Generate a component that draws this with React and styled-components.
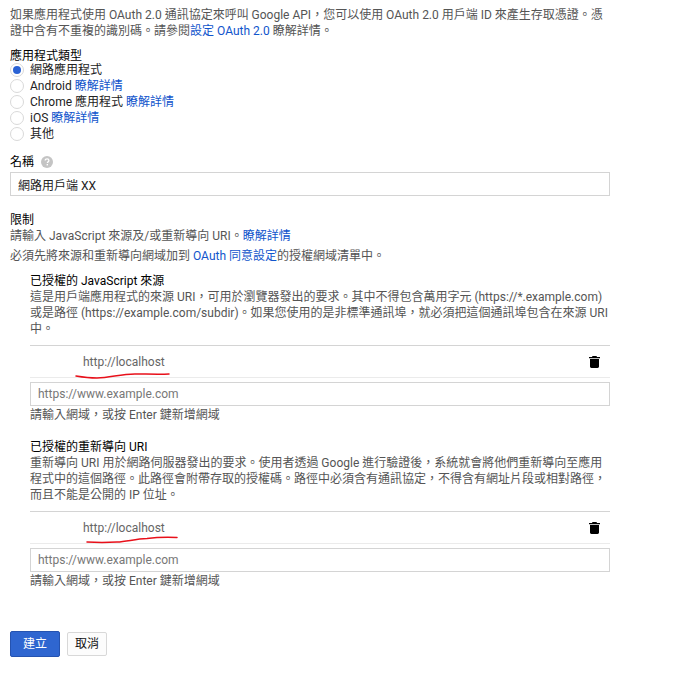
import styled, { createGlobalStyle } from 'styled-components';

const GlobalStyle = createGlobalStyle`
  html, body {
    margin: 0;
    padding: 0;
    background: #fff;
  }
  body {
    font-family: Roboto, "Noto Sans CJK TC", sans-serif;
    font-size: 12px;
    line-height: 16px;
    color: #555;
  }
`;

const Page = styled.form`
  width: 600px;
  height: 676px;
  padding: 7px 0 0 10px;
`;

const Intro = styled.p`
  margin: 0 0 9px;
`;

const A = styled.span`
  color: #15c;
`;

const Label = styled.div`
  color: #000;
`;

const RadioList = styled.div`
  display: flex;
  flex-direction: column;
  margin-top: -2px;
`;

const RadioRow = styled.div`
  display: flex;
  align-items: center;
  height: 16px;
  gap: 6px;
  color: #222;
`;

const Radio = styled.span`
  width: 14px;
  height: 14px;
  box-sizing: border-box;
  border-radius: 50%;
  border: 1px solid #d9d9d9;
  padding: 2px;
  background: ${(p) => (p.$on ? '#2a62d4' : '#fff')};
  background-clip: content-box;
  flex: none;
`;

const NameRow = styled.div`
  display: flex;
  align-items: center;
  gap: 7px;
  margin: 12px 0 2px;
  color: #000;
`;

const Input = styled.input`
  display: block;
  width: 100%;
  height: 24px;
  box-sizing: border-box;
  border: 1px solid #d4d4d4;
  padding: 0 7px;
  font: inherit;
  color: #222;
  background: #fff;
  outline: none;

  &::placeholder {
    color: #777;
    opacity: 1;
  }
`;

const Restrict = styled.div`
  margin-top: 16px;
`;

const Note = styled.div`
  margin-top: 4px;
`;

const Section = styled.section`
  margin: ${(p) => p.$top}px 0 0 20px;
`;

const UriRow = styled.div`
  position: relative;
  display: flex;
  align-items: center;
  justify-content: space-between;
  height: 31px;
  margin: 8px 0 4px;
  padding: 0 10px 0 53px;
  border-top: 1px solid #d4d4d4;
  border-bottom: 1px solid #ebebeb;
  color: #666;
`;

const Scribble = styled.svg`
  position: absolute;
  left: 40px;
  top: 24px;
  pointer-events: none;
`;

const Hint = styled.div`
  margin-top: 1px;
`;

const Actions = styled.div`
  display: flex;
  align-items: center;
  gap: 7px;
  margin-top: 42px;
`;

const Primary = styled.button`
  width: 50px;
  height: 26px;
  border: 1px solid #2553b0;
  border-radius: 2px;
  background: #2f66d0;
  color: #fff;
  font: inherit;
  padding: 0;
`;

const Secondary = styled.button`
  width: 40px;
  height: 24px;
  border: 1px solid #d8d8d8;
  border-radius: 2px;
  background: #fcfcfc;
  color: #111;
  font: inherit;
  padding: 0;
`;

const HelpIcon = () => (
  <svg width="12" height="12" viewBox="0 0 12 12">
    <circle cx="6" cy="6" r="6" fill="#c4c4c4" />
    <path d="M4.2 4.6c0-1.1.8-1.8 1.9-1.8s1.8.7 1.8 1.6c0 1.2-1.5 1.3-1.5 2.5" fill="none" stroke="#fff" strokeWidth="1.3" />
    <rect x="5.6" y="8" width="1.4" height="1.4" fill="#fff" />
  </svg>
);

const TrashIcon = () => (
  <svg width="11" height="12" viewBox="0 0 11 12">
    <path d="M3.5 0h4l.5 1h3v1.2H0V1h3z" fill="#000" />
    <path d="M1 3h9v7.6c0 .8-.6 1.4-1.4 1.4H2.4C1.6 12 1 11.4 1 10.6z" fill="#000" />
  </svg>
);

const types = [
  { label: '網路應用程式', on: true },
  { label: 'Android', more: true },
  { label: 'Chrome 應用程式', more: true },
  { label: 'iOS', more: true },
  { label: '其他' },
];

const App = () => {
  return (
    <Page>
      <GlobalStyle />
      <Intro>
        如果應用程式使用 OAuth 2.0 通訊協定來呼叫 Google API&#xFF0C;您可以使用 OAuth 2.0 用戶端 ID 來產生存取憑證。憑證中含有不重複的識別碼。請參閱<A>設定 OAuth 2.0</A> 瞭解詳情。
      </Intro>

      <Label>應用程式類型</Label>
      <RadioList>
        {types.map((t) => (
          <RadioRow key={t.label}>
            <Radio $on={t.on} />
            <span>
              {t.label}
              {t.more && <A> 瞭解詳情</A>}
            </span>
          </RadioRow>
        ))}
      </RadioList>

      <NameRow>
        名稱 <HelpIcon />
      </NameRow>
      <Input defaultValue="網路用戶端 XX" />

      <Restrict>
        <Label>限制</Label>
        <div>
          請輸入 JavaScript 來源及/或重新導向 URI。<A>瞭解詳情</A>
        </div>
        <Note>
          必須先將來源和重新導向網域加到 <A>OAuth 同意設定</A>的授權網域清單中。
        </Note>
      </Restrict>

      <Section $top={9}>
        <Label>已授權的 JavaScript 來源</Label>
        <div>
          這是用戶端應用程式的來源 URI&#xFF0C;可用於瀏覽器發出的要求。其中不得包含萬用字元 (https://*.example.com) 或是路徑 (https://example.com/subdir)。如果您使用的是非標準通訊埠&#xFF0C;就必須把這個通訊埠包含在來源 URI 中。
        </div>
        <UriRow>
          http://localhost
          <TrashIcon />
          <Scribble width="110" height="10" viewBox="0 0 110 10">
            <path d="M6 6C12 7 20 8 27 8C40 8 50 4 65 4C75 4 90 4.5 99 4" fill="none" stroke="#e8101a" strokeWidth="1.5" strokeLinecap="round" />
          </Scribble>
        </UriRow>
        <Input placeholder="https://www.example.com" />
        <Hint>請輸入網域&#xFF0C;或按 Enter 鍵新增網域</Hint>
      </Section>

      <Section $top={16}>
        <Label>已授權的重新導向 URI</Label>
        <div>
          重新導向 URI 用於網路伺服器發出的要求。使用者透過 Google 進行驗證後&#xFF0C;系統就會將他們重新導向至應用程式中的這個路徑。此路徑會附帶存取的授權碼。路徑中必須含有通訊協定&#xFF0C;不得含有網址片段或相對路徑&#xFF0C;而且不能是公開的 IP 位址。
        </div>
        <UriRow>
          http://localhost
          <TrashIcon />
          <Scribble width="110" height="10" viewBox="0 0 110 10">
            <path d="M17 6C27 6.5 37 6.5 47 6C57 5.5 65 3 77 2.5C85 1.5 95 1 107 1.5" fill="none" stroke="#e8101a" strokeWidth="1.5" strokeLinecap="round" />
          </Scribble>
        </UriRow>
        <Input placeholder="https://www.example.com" />
        <Hint>請輸入網域&#xFF0C;或按 Enter 鍵新增網域</Hint>
      </Section>

      <Actions>
        <Primary type="button">建立</Primary>
        <Secondary type="button">取消</Secondary>
      </Actions>
    </Page>
  );
};

export default App;
